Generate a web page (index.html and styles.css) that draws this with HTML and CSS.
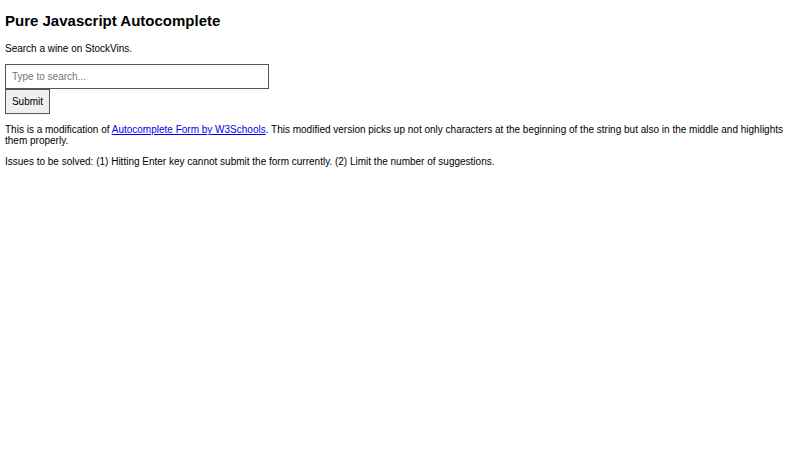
FILE: index.html
```html
<!DOCTYPE html>
<html>
<head>
<meta charset="utf-8">
<link rel="stylesheet" href="styles.css">
</head>
<body>
<h2 class="title">Pure Javascript Autocomplete</h2>
<p class="lead">Search a wine on StockVins.</p>
<form class="search-form" autocomplete="off">
  <div class="autocomplete">
    <input class="search-input" type="text" placeholder="Type to search...">
  </div>
  <button class="submit-btn" type="button">Submit</button>
</form>
<p class="note">This is a modification of <a href="#">Autocomplete Form by W3Schools</a>. This modified version picks up not only characters at the beginning of the string but also in the middle and highlights them properly.</p>
<p class="note">Issues to be solved: (1) Hitting Enter key cannot submit the form currently. (2) Limit the number of suggestions.</p>
</body>
</html>
```
FILE: styles.css
```css
html, body {
  background: #fff;
}
body {
  margin: 5px;
  font-family: "Liberation Sans", Arial, sans-serif;
  font-size: 10px;
  color: #000;
}
.title {
  font-size: 15px;
  line-height: 17px;
  font-weight: bold;
  margin: 7px 0 14px;
}
.lead {
  margin: 0 0 10px;
}
.search-form {
  margin: 0 0 10px;
}
.autocomplete {
  display: block;
}
.search-input {
  box-sizing: border-box;
  width: 264px;
  height: 25px;
  border: 1px solid #555;
  padding: 0 6px;
  font-family: "Liberation Sans", Arial, sans-serif;
  font-size: 10px;
  margin: 0;
  display: block;
}
.search-input::placeholder {
  color: #757575;
}
.submit-btn {
  box-sizing: border-box;
  height: 25px;
  width: 45px;
  margin: 0;
  padding: 0;
  border: 1px solid #555;
  background: #efefef;
  font-family: "Liberation Sans", Arial, sans-serif;
  font-size: 10px;
  color: #000;
  display: block;
}
.note {
  margin: 0 0 10px;
}
.note a {
  color: #0000ee;
}
```
